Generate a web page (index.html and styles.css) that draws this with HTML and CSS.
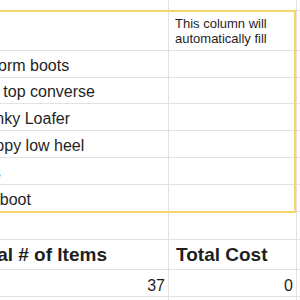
FILE: index.html
```html
<!DOCTYPE html>
<html>
<head>
<meta charset="utf-8">
<link rel="stylesheet" href="styles.css">
</head>
<body>
<div class="viewport">
  <div class="sheet">
    <div class="cell"></div><div class="cell"></div><div class="cell"></div>
    <div class="cell"></div><div class="cell note">This column will automatically fill</div><div class="cell"></div>
    <div class="cell item">Platform boots</div><div class="cell"></div><div class="cell"></div>
    <div class="cell item">High top converse</div><div class="cell"></div><div class="cell"></div>
    <div class="cell item">Chunky Loafer</div><div class="cell"></div><div class="cell"></div>
    <div class="cell item">Strappy low heel</div><div class="cell"></div><div class="cell"></div>
    <div class="cell item">Flats</div><div class="cell"></div><div class="cell"></div>
    <div class="cell item">Ugg boot</div><div class="cell"></div><div class="cell"></div>
    <div class="cell"></div><div class="cell"></div><div class="cell"></div>
    <div class="cell head">Total # of Items</div><div class="cell head headb">Total Cost</div><div class="cell"></div>
    <div class="cell num">37</div><div class="cell num">0</div><div class="cell"></div>
    <div class="cell"></div><div class="cell"></div><div class="cell"></div>
  </div>
  <div class="selection"></div>
</div>
</body>
</html>
```
FILE: styles.css
```css
html, body {
  margin: 0;
  padding: 0;
  background: #ffffff;
}
body {
  width: 300px;
  height: 300px;
  overflow: hidden;
}
.viewport {
  position: relative;
  width: 300px;
  height: 300px;
  overflow: hidden;
  font-family: "Liberation Sans", Arial, sans-serif;
  color: #1f1f1f;
}
.sheet {
  display: grid;
  margin-left: -35px;
  grid-template-columns: 204px 128px 60px;
  grid-template-rows: 11px 40px 27px 26px 27px 27px 27px 27px 28px 30px 27px 20px;
}
.cell {
  box-sizing: border-box;
  border-right: 1px solid #e2e2e2;
  border-bottom: 1px solid #e2e2e2;
  font-size: 16px;
  line-height: 18px;
  white-space: nowrap;
  overflow: hidden;
  display: flex;
  align-items: flex-end;
  padding: 0 4px 2px 4px;
}
.item {
  padding-left: 1px;
}
.note {
  font-size: 13px;
  line-height: 15px;
  white-space: normal;
  align-items: flex-start;
  padding: 5px 4px 0 6px;
}
.head {
  font-weight: bold;
  font-size: 19px;
  line-height: 22px;
  padding-bottom: 3px;
}
.headb {
  padding-left: 7px;
}
.num {
  justify-content: flex-end;
  padding-right: 3px;
  padding-bottom: 1px;
}
.selection {
  position: absolute;
  left: -40px;
  top: 10px;
  width: 336px;
  height: 203px;
  box-sizing: border-box;
  border: 2px solid #f7d56b;
  pointer-events: none;
}
```
